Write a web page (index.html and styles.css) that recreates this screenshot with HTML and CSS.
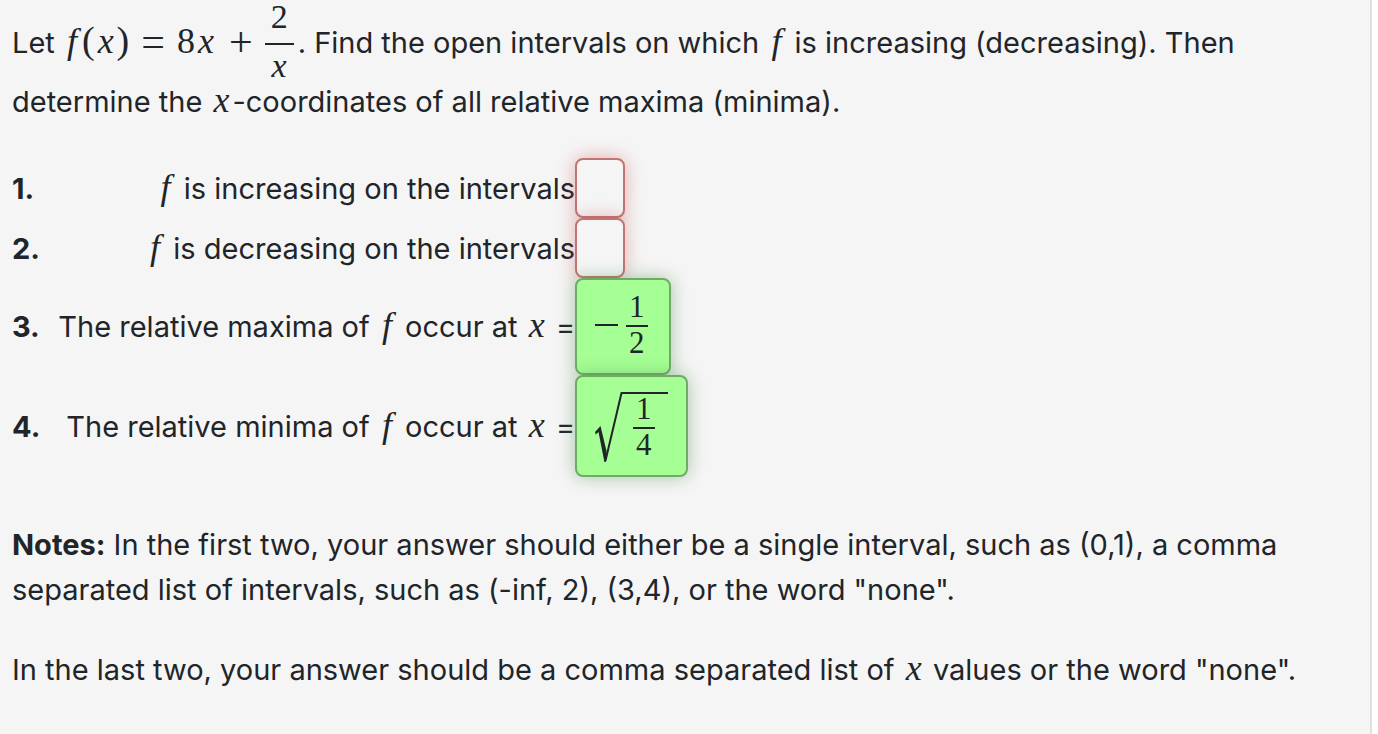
FILE: index.html
```html
<!DOCTYPE html>
<html lang="en">
<head>
  <meta charset="UTF-8">
  <meta name="viewport" content="width=device-width, initial-scale=1.0">
  <title>Increasing and decreasing intervals</title>
  <link rel="stylesheet" href="styles.css">
</head>
<body>
  <main class="problem">
    <p class="statement">Let <span class="math"><i class="f">f</i><span class="paren">(</span><i class="x">x</i><span class="paren">)</span><span class="op">=</span>8<i class="x">x</i><span class="op">+</span><span class="frac big"><span class="num">2</span><span class="den"><i>x</i></span></span></span>. Find the open intervals on which <i class="math f">f</i> is increasing (decreasing). Then determine the <i class="math x">x</i>-coordinates of all relative maxima (minima).</p>

    <form class="answers">
      <b>1.</b>
      <label for="increasing"><i class="math f">f</i> is increasing on the intervals</label>
      <input class="answer incorrect" id="increasing" type="text">

      <b>2.</b>
      <label for="decreasing"><i class="math f">f</i> is decreasing on the intervals</label>
      <input class="answer incorrect" id="decreasing" type="text">

      <b>3.</b>
      <span class="label" id="maxima">The relative maxima of <i class="math f">f</i> occur at <i class="math x">x</i> =</span>
      <div class="answer correct" role="textbox" tabindex="0" aria-labelledby="maxima">
        <span class="minus"></span>
        <span class="frac small"><span class="num">1</span><span class="den">2</span></span>
      </div>

      <b>4.</b>
      <span class="label" id="minima">The relative minima of <i class="math f">f</i> occur at <i class="math x">x</i> =</span>
      <div class="answer correct root" role="textbox" tabindex="0" aria-labelledby="minima">
        <svg class="radical" viewBox="0 0 28 72" aria-hidden="true">
          <path class="tick" d="M0 40 L5.500 34 L11.500 59 L10.800 70 L9.400 70 L3.500 40 L.8 42.500 Z"/>
          <path class="stem" d="M10.400 69 L26.500 1 H28"/>
        </svg>
        <span class="radicand"><span class="frac small"><span class="num">1</span><span class="den">4</span></span></span>
      </div>
    </form>

    <p class="notes"><b>Notes:</b> In the first two, your answer should either be a single interval, such as (0,1), a comma separated list of intervals, such as (-inf, 2), (3,4), or the word "none".</p>
    <p class="notes">In the last two, your answer should be a comma separated list of <i class="math x">x</i> values or the word "none".</p>
  </main>
</body>
</html>
```
FILE: styles.css
```css
* {
  box-sizing: border-box;
}

body {
  margin: 0;
  background-color: #fff;
  color: #212529;
  font-family: Inter, "Liberation Sans", sans-serif;
  font-size: 29px;
  line-height: 45px;
}

.problem {
  min-height: 100vh;
  margin-right: 6px;
  padding: 4px 12px;
  border-right: 2px solid #e0e0e0;
  background-color: #f5f5f5;
}

p {
  margin: 0;
}

.math,
.frac {
  font-family: "Liberation Serif", serif;
  font-size: 36px;
  line-height: 36px;
}

.f {
  padding: 0 5px 0 4px;
}

.x {
  padding: 0 3px;
}

.paren {
  font-size: 38px;
}

.op {
  margin: 0 12px;
  font-size: 42px;
  vertical-align: -3px;
}

.frac {
  display: inline-flex;
  flex-direction: column;
  text-align: center;
}

.num {
  border-bottom: 2px solid #212529;
}

.big {
  margin-right: 4px;
  font-size: 34px;
  line-height: 26px;
  vertical-align: 25px;
}

.big .num {
  padding: 0 6px 13px;
}

.big .den {
  padding-top: 8px;
}

.answers {
  display: grid;
  grid-template-columns: auto auto 1fr;
  align-items: center;
  justify-items: start;
  margin: 34px 0 45px;
}

.answers b {
  margin-right: 18px;
}

.answers label,
.answers .label {
  justify-self: end;
}

.answer {
  display: flex;
  align-items: center;
  border: 2px solid;
  border-radius: 8px;
}

.incorrect {
  width: 50px;
  height: 60px;
  border-color: #bf7573;
  background-color: #f5f5f5;
  box-shadow: 0 0 18px rgba(200, 70, 70, 0.4);
  font: inherit;
}

.correct {
  gap: 8px;
  height: 97px;
  padding: 0 21px 3px 18px;
  border-color: #70ab65;
  background-color: #a6ff94;
  box-shadow: 0 0 18px rgba(70, 136, 71, 0.45);
}

.minus {
  width: 23px;
  border-top: 2px solid #212529;
}

.small {
  font-size: 31px;
  line-height: 30px;
}

.small .num {
  padding: 0 3px 3px;
}

.small .den {
  padding-top: 1px;
}

.root {
  gap: 0;
  height: 102px;
  padding: 4px 18px 0 18px;
}

.radical {
  width: 28px;
  height: 72px;
}

.tick {
  fill: #212529;
}

.stem {
  fill: none;
  stroke: #212529;
  stroke-width: 2;
}

.radicand {
  display: flex;
  height: 72px;
  padding: 0 13px 0 10px;
  border-top: 2px solid #212529;
}

.notes {
  margin-bottom: 35px;
}
```
